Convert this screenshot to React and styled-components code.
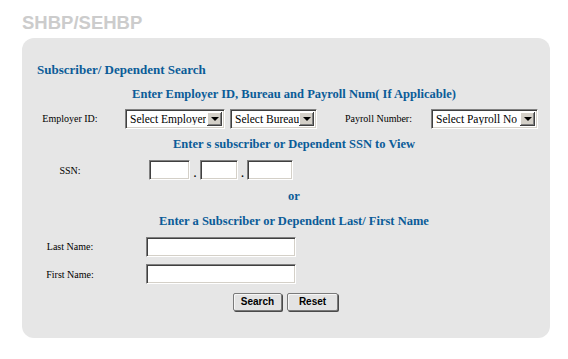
import React from 'react'
import styled, { createGlobalStyle } from 'styled-components'

const GlobalStyle = createGlobalStyle`
  body {
    margin: 0;
    background: #ffffff;
    font-family: 'Liberation Serif', 'Times New Roman', serif;
  }
`

const Page = styled.div`
  width: 568px;
  height: 359px;
  overflow: hidden;
`

const SiteTitle = styled.h1`
  margin: 0;
  padding: 12px 0 0 22px;
  height: 21px;
  line-height: 21px;
  font-family: 'Liberation Sans', Arial, sans-serif;
  font-size: 18.5px;
  font-weight: bold;
  color: #cccccc;
`

const Panel = styled.div`
  box-sizing: border-box;
  margin: 5px 0 0 22px;
  width: 528px;
  height: 300px;
  padding: 20px 0 0 15px;
  background: #e6e6e6;
  border-radius: 12px;
`

const Content = styled.div`
  width: 514px;
  display: flex;
  flex-direction: column;
`

const SectionTitle = styled.div`
  height: 24px;
  display: flex;
  align-items: center;
  font-size: 13px;
  font-weight: bold;
  color: #0b5c98;
`

const Heading = styled.div`
  height: ${p => p.$h || 24}px;
  display: flex;
  align-items: center;
  justify-content: center;
  font-size: 12.5px;
  font-weight: bold;
  color: #0b5c98;
`

const FieldRow = styled.div`
  height: ${p => p.$h || 25}px;
  display: flex;
  align-items: center;
`

const Label = styled.span`
  width: ${p => p.$w || 66}px;
  flex: none;
  text-align: center;
  font-size: 10px;
  color: #000000;
  margin-left: ${p => p.$ml || 0}px;
`

const Controls = styled.div`
  display: flex;
  align-items: center;
  margin-left: ${p => p.$ml || 0}px;
`

const SelectBox = styled.div`
  box-sizing: border-box;
  width: ${p => p.$w}px;
  height: 20px;
  display: flex;
  align-items: center;
  justify-content: space-between;
  background: #ffffff;
  border: 1px solid;
  border-color: #808080 #ffffff #ffffff #808080;
  box-shadow: inset 1px 1px 0 #404040, inset -1px -1px 0 #d4d0c8;
  padding: 2px;
  margin-left: ${p => p.$ml || 0}px;
`

const SelectText = styled.span`
  padding-left: 2px;
  font-size: 11.5px;
  color: #000000;
  white-space: nowrap;
  overflow: hidden;
`

const ArrowButton = styled.span`
  box-sizing: border-box;
  flex: none;
  width: 15px;
  height: 14px;
  display: flex;
  align-items: center;
  justify-content: center;
  background: #d4d0c8;
  box-shadow: inset -1px -1px 0 #404040, inset 1px 1px 0 #ffffff,
    inset -2px -2px 0 #808080;

  &::after {
    content: '';
    width: 0;
    height: 0;
    border-left: 4px solid transparent;
    border-right: 4px solid transparent;
    border-top: 4px solid #000000;
    margin-top: 1px;
  }
`

const TextBox = styled.input`
  box-sizing: border-box;
  width: ${p => p.$w}px;
  height: 20px;
  margin: 0;
  padding: 1px 3px;
  background: #ffffff;
  border: 1px solid;
  border-color: #808080 #ffffff #ffffff #808080;
  box-shadow: inset 1px 1px 0 #404040, inset -1px -1px 0 #d4d0c8;
  font-family: 'Liberation Serif', 'Times New Roman', serif;
  font-size: 12px;
  caret-color: #000000;
  outline: none;
`

const Dot = styled.span`
  width: ${p => p.$w || 10}px;
  text-align: center;
  font-size: 10px;
  font-weight: bold;
  padding-top: 6px;
`

const ButtonRow = styled.div`
  height: 27px;
  display: flex;
  align-items: center;
  gap: 5px;
  padding-left: 196px;
`

const Button = styled.button`
  box-sizing: border-box;
  width: ${p => p.$w}px;
  height: 18px;
  padding: 0;
  background: #e3e3e3;
  border: 1px solid #7a7a7a;
  border-radius: 2px;
  box-shadow: 1px 1px 0 #4a4a4a, inset 1px 1px 0 #f6f6f6;
  font-family: 'Liberation Sans', Arial, sans-serif;
  font-size: 10px;
  font-weight: bold;
  color: #000000;
`

function Dropdown({ width, ml, children }) {
  return (
    <SelectBox $w={width} $ml={ml}>
      <SelectText>{children}</SelectText>
      <ArrowButton />
    </SelectBox>
  )
}

export default function App() {
  return (
    <Page>
      <GlobalStyle />
      <SiteTitle>SHBP/SEHBP</SiteTitle>
      <Panel>
        <Content>
          <SectionTitle>Subscriber/ Dependent Search</SectionTitle>
          <Heading>Enter Employer ID, Bureau and Payroll Num( If Applicable)</Heading>
          <FieldRow $h={25}>
            <Label>Employer ID:</Label>
            <Controls $ml={22}>
              <Dropdown width={100}>Select Employer</Dropdown>
              <Dropdown width={87} ml={5}>Select Bureau</Dropdown>
              <Label $w={67} $ml={28}>Payroll Number:</Label>
              <Dropdown width={107} ml={19}>Select Payroll No</Dropdown>
            </Controls>
          </FieldRow>
          <Heading $h={26}>Enter s subscriber or Dependent SSN to View</Heading>
          <FieldRow $h={26}>
            <Label>SSN:</Label>
            <Controls $ml={46}>
              <TextBox $w={41} />
              <Dot>.</Dot>
              <TextBox $w={38} />
              <Dot $w={9}>.</Dot>
              <TextBox $w={46} />
            </Controls>
          </FieldRow>
          <Heading $h={26}>or</Heading>
          <Heading $h={24}>Enter a Subscriber or Dependent Last/ First Name</Heading>
          <FieldRow $h={27}>
            <Label>Last Name:</Label>
            <Controls $ml={43}>
              <TextBox $w={150} autoFocus />
            </Controls>
          </FieldRow>
          <FieldRow $h={28}>
            <Label>First Name:</Label>
            <Controls $ml={43}>
              <TextBox $w={150} />
            </Controls>
          </FieldRow>
          <ButtonRow>
            <Button $w={49}>Search</Button>
            <Button $w={51}>Reset</Button>
          </ButtonRow>
        </Content>
      </Panel>
    </Page>
  )
}
